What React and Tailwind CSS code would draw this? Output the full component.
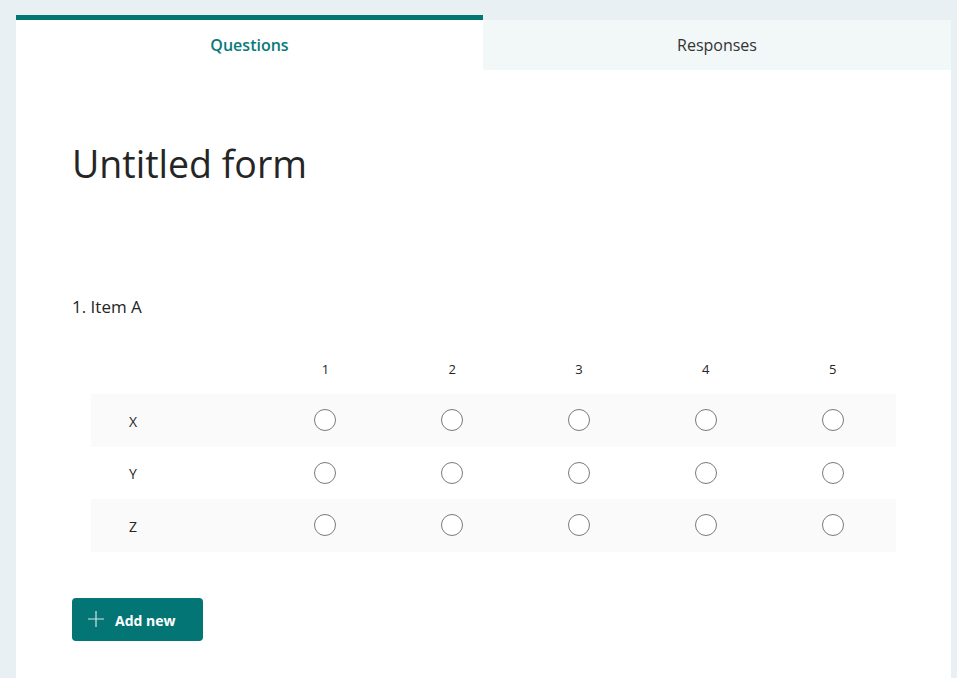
import React from 'react';

const cols = ['1', '2', '3', '4', '5'];
const rows = ['X', 'Y', 'Z'];

const Radio = () => (
  <span className="block w-[22px] h-[22px] rounded-full border-[1.5px] border-[#7a7a7a] bg-white" />
);

const App = () => {
  return (
    <div className="min-h-[678px] bg-[#e8f0f3] pt-[15px] pl-[16px] pr-[6px] overflow-hidden" style={{ fontFamily: '"Open Sans", "Noto Sans", sans-serif' }}>
      <div className="bg-white min-h-[663px]">
        {/* Tabs */}
        <div className="flex bg-[#e8f0f3]">
          <div className="w-[467px] h-[55px] border-t-[5px] border-[#037575] bg-white flex items-center justify-center text-[16px] font-semibold text-[#097a7a]">
            Questions
          </div>
          <div className="flex-1 mt-[5px] h-[50px] bg-[#f2f7f8] flex items-center justify-center text-[16px] text-[#333]">
            Responses
          </div>
        </div>

        <div className="pl-[56px] pr-[55px]">
          <h1 className="pt-[70px] text-[37.5px] leading-[48px] text-[#252525]">Untitled form</h1>

          <div className="pt-[107px] text-[17px] text-[#252525] leading-[24px]">1. Item A</div>

          {/* Likert grid */}
          <div className="mt-[31px] ml-[19px]">
            <div className="grid grid-cols-[171px_repeat(5,1fr)] h-[44px] items-center pb-[4px] text-[13px] text-[#252525]">
              <div />
              {cols.map((c) => (
                <div key={c} className="text-center">{c}</div>
              ))}
            </div>
            {rows.map((r, i) => (
              <div
                key={r}
                className={`grid grid-cols-[171px_repeat(5,1fr)] h-[52.5px] items-center ${i % 2 === 0 ? 'bg-[#fafafa]' : 'bg-white'}`}
              >
                <div className="pl-[38px] pt-[2px] text-[14px] text-[#252525]">{r}</div>
                {cols.map((c) => (
                  <div key={c} className="flex justify-center">
                    <Radio />
                  </div>
                ))}
              </div>
            ))}
          </div>

          <button className="mt-[46px] h-[43px] w-[131px] rounded-[4px] bg-[#037575] flex items-center pl-[16px] pt-[3px] gap-[11px] text-white text-[14px] font-bold">
            <svg className="-mt-[3px]" width="16" height="16" viewBox="0 0 16 16" fill="none" stroke="#cfe6e6" strokeWidth="1.2">
              <path d="M8 0v16M0 8h16" />
            </svg>
            Add new
          </button>
        </div>
      </div>
    </div>
  );
};

export default App;
